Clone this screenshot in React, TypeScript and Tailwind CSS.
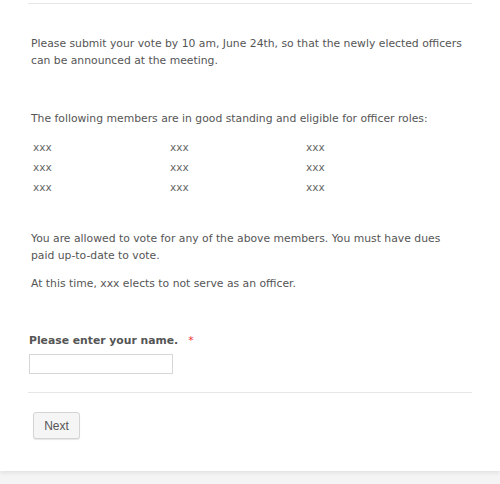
import React from "react";

const members = ["xxx", "xxx", "xxx", "xxx", "xxx", "xxx", "xxx", "xxx", "xxx"];

export default function App() {
  return (
    <div className="min-h-[484px] bg-[#f4f4f4] font-['DejaVu_Sans',Verdana,sans-serif] text-[#555]">
      <div className="bg-white pt-[3px] pb-[32px] shadow-[0_2px_4px_rgba(0,0,0,0.08)]">
        <div className="mx-[28px] border-t border-[#e6e6e6]">
          <div className="pl-[3px] pt-[31px] text-[10.8px] leading-[17px]">
            <p>
              Please submit your vote by 10 am, June 24th, so that the newly elected officers can be
              announced at the meeting.
            </p>
            <p className="mt-[41px]">
              The following members are in good standing and eligible for officer roles:
            </p>
            <div className="mt-[10px] grid grid-cols-[137px_136px_137px] pl-[2px] text-[10.5px] text-[#666]">
              {members.map((m, i) => (
                <div key={i} className="h-[20px] leading-[20px]">
                  {m}
                </div>
              ))}
            </div>
            <p className="mt-[33px] pr-[20px]">
              You are allowed to vote for any of the above members. You must have dues paid
              up-to-date to vote.
            </p>
            <p className="mt-[11px]">At this time, xxx elects to not serve as an officer.</p>
          </div>

          <div className="mt-[40px] px-[1px]">
            <label className="flex items-start text-[10.8px] font-bold leading-[17px] text-[#555]">
              Please enter your name.
              <span className="ml-[10px] text-[#e33] font-normal">*</span>
            </label>
            <input
              type="text"
              className="mt-[5px] block h-[20px] w-[144px] border border-[#d6d6d6] bg-white outline-none"
            />
          </div>

          <div className="mt-[18px] border-t border-[#e6e6e6] pt-[19px] pl-[5px]">
            <button className="h-[27px] w-[47px] rounded-[3px] border border-[#d4d4d4] bg-[#f5f5f5] font-['Liberation_Sans',Arial,sans-serif] text-[12px] text-[#555] shadow-[0_1px_1px_rgba(0,0,0,0.1)]">
              Next
            </button>
          </div>
        </div>
      </div>
    </div>
  );
}
